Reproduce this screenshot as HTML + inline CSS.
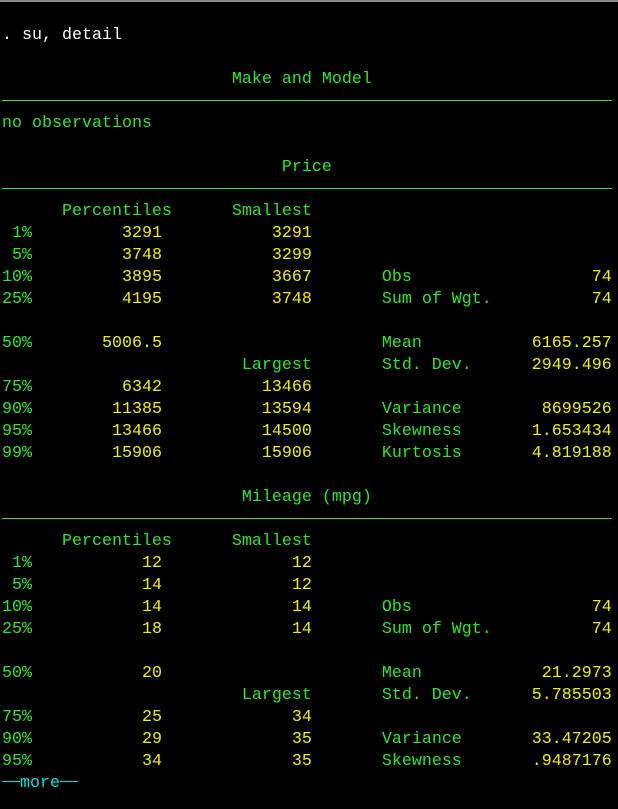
<!DOCTYPE html>
<html><head><meta charset="utf-8"><style>
html,body{margin:0;padding:0;background:#000;width:618px;height:809px;overflow:hidden}
#top{position:absolute;left:0;top:0;width:618px;height:2px;background:#8a8a8a}
#c{position:absolute;left:2px;top:25px;font-family:"Liberation Mono",monospace;font-size:16.67px;line-height:22px;color:#2ee62e}
.r{height:22px;position:relative;white-space:pre}
.y{color:#f0f000}
.w{color:#fff}
.rule{position:absolute;left:0;top:9px;width:610px;height:1px;background:#2ee62e}
.cy{color:#00e0e0}
.ln{display:inline-block;width:18px;height:1px;background:#00e0e0;vertical-align:middle;margin-top:-2px}
</style></head><body><div id="top"></div><div id="c"><div class="r w">. su, detail</div><div class="r"></div><div class="r">                       Make and Model</div><div class="r"><div class="rule"></div></div><div class="r">no observations</div><div class="r"></div><div class="r">                            Price</div><div class="r"><div class="rule"></div></div><div class="r">      Percentiles      Smallest</div><div class="r"> 1%<span class="y">         3291           3291</span></div><div class="r"> 5%<span class="y">         3748           3299</span></div><div class="r">10%<span class="y">         3895           3667</span>       Obs<span class="y">                  74</span></div><div class="r">25%<span class="y">         4195           3748</span>       Sum of Wgt.<span class="y">          74</span></div><div class="r"></div><div class="r">50%<span class="y">       5006.5</span>                      Mean<span class="y">           6165.257</span></div><div class="r">                        Largest       Std. Dev.<span class="y">      2949.496</span></div><div class="r">75%<span class="y">         6342          13466</span></div><div class="r">90%<span class="y">        11385          13594</span>       Variance<span class="y">        8699526</span></div><div class="r">95%<span class="y">        13466          14500</span>       Skewness<span class="y">       1.653434</span></div><div class="r">99%<span class="y">        15906          15906</span>       Kurtosis<span class="y">       4.819188</span></div><div class="r"></div><div class="r">                        Mileage (mpg)</div><div class="r"><div class="rule"></div></div><div class="r">      Percentiles      Smallest</div><div class="r"> 1%<span class="y">           12             12</span></div><div class="r"> 5%<span class="y">           14             12</span></div><div class="r">10%<span class="y">           14             14</span>       Obs<span class="y">                  74</span></div><div class="r">25%<span class="y">           18             14</span>       Sum of Wgt.<span class="y">          74</span></div><div class="r"></div><div class="r">50%<span class="y">           20</span>                      Mean<span class="y">            21.2973</span></div><div class="r">                        Largest       Std. Dev.<span class="y">      5.785503</span></div><div class="r">75%<span class="y">           25             34</span></div><div class="r">90%<span class="y">           29             35</span>       Variance<span class="y">       33.47205</span></div><div class="r">95%<span class="y">           34             35</span>       Skewness<span class="y">       .9487176</span></div><div class="r cy"><span class="ln"></span>more<span class="ln"></span></div></div></body></html>
